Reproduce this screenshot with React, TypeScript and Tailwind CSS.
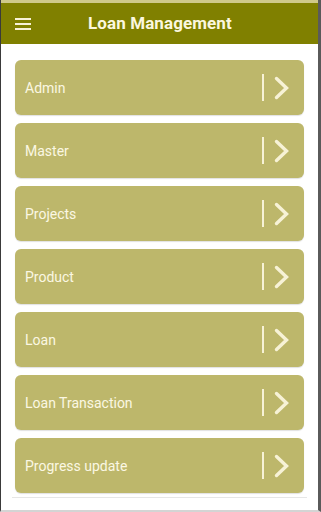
const items = [
  "Admin",
  "Master",
  "Projects",
  "Product",
  "Loan",
  "Loan Transaction",
  "Progress update",
];

function Arrow() {
  return (
    <div className="flex items-center gap-[9px] pr-[14px]">
      <div className="w-[2px] h-[27px] bg-[#f7f2d6]" />
      <svg width="17" height="24" viewBox="0 0 17 24" fill="none">
        <path
          d="M3.5 2.5 L13.5 12 L3.5 21.5"
          stroke="#f7f2d6"
          strokeWidth="3.4"
          strokeLinecap="round"
          strokeLinejoin="miter"
        />
      </svg>
    </div>
  );
}

export default function App() {
  return (
    <div
      className="w-[321px] h-[512px] overflow-hidden bg-white flex flex-col border-l border-l-[#3a3a3a] border-r-[3px] border-r-[#5a5a5a] border-b-2 border-b-[#d4d4d4]"
      style={{ fontFamily: "Roboto, 'Liberation Sans', sans-serif" }}
    >
      <div className="h-[3px] bg-[#cfc98a] shrink-0" />
      <div className="h-[41px] bg-[#808000] flex items-center shrink-0 relative">
        <div className="flex flex-col gap-[3px] ml-[14px]">
          <div className="w-[16px] h-[2px] bg-[#f7f2d6]" />
          <div className="w-[16px] h-[2px] bg-[#f7f2d6]" />
          <div className="w-[16px] h-[2px] bg-[#f7f2d6]" />
        </div>
        <div className="ml-[57px] text-[17px] font-bold text-[#fbf7df] tracking-[0.1px]">
          Loan Management
        </div>
      </div>
      <div className="mx-[11px] mt-[16px] px-[3px] pb-[4px] border-b border-b-[#e6e6e6] flex flex-col gap-[8px]">
        {items.map((label) => (
          <div
            key={label}
            className="h-[55px] rounded-[6px] bg-[#bdb76b] flex items-center justify-between shadow-[0_1px_1px_rgba(0,0,0,0.12)]"
          >
            <span className="pl-[10px] pt-[2px] text-[14px] text-[#fbf7e3]">{label}</span>
            <Arrow />
          </div>
        ))}
      </div>
    </div>
  );
}
